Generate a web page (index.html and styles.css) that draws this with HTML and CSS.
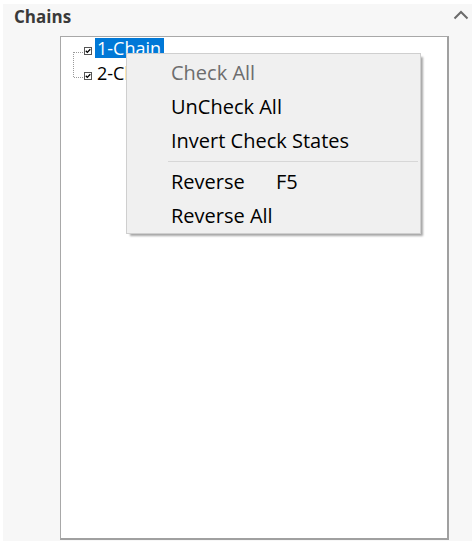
FILE: index.html
```html
<!DOCTYPE html>
<html>
<head>
<meta charset="utf-8">
<link rel="stylesheet" href="styles.css">
</head>
<body>
<div class="panel">
  <div class="header">
    <span class="title">Chains</span>
    <svg class="chevron" width="16" height="10" viewBox="0 0 16 10"><polyline points="1.5,8.5 8,2 14.5,8.5" fill="none" stroke="#6b6b6b" stroke-width="2"/></svg>
  </div>
  <div class="tree">
    <div class="tree-body">
      <svg class="connectors" width="23" height="50" viewBox="0 0 23 50">
        <g stroke="#9a9a9a" stroke-width="1" stroke-dasharray="1 1" fill="none">
          <line x1="12.5" y1="15" x2="12.5" y2="41"/>
          <line x1="13" y1="15.5" x2="22" y2="15.5"/>
          <line x1="13" y1="40.5" x2="22" y2="40.5"/>
        </g>
      </svg>
      <div class="items">
        <div class="row">
          <svg class="check" width="8" height="8" viewBox="0 0 8 8"><rect x="0.5" y="0.5" width="7" height="7" fill="#fff" stroke="#555"/><path d="M1.8 3.8 L3.3 5.4 L6.3 2.2" fill="none" stroke="#000" stroke-width="1.3"/></svg>
          <span class="label selected">1-Chain</span>
        </div>
        <div class="row">
          <svg class="check" width="8" height="8" viewBox="0 0 8 8"><rect x="0.5" y="0.5" width="7" height="7" fill="#fff" stroke="#555"/><path d="M1.8 3.8 L3.3 5.4 L6.3 2.2" fill="none" stroke="#000" stroke-width="1.3"/></svg>
          <span class="label">2-Chain</span>
        </div>
      </div>
    </div>
  </div>
</div>
<div class="menu">
  <div class="menu-item disabled">Check All</div>
  <div class="menu-item">UnCheck All</div>
  <div class="menu-item">Invert Check States</div>
  <div class="menu-sep"></div>
  <div class="menu-item"><span class="menu-label">Reverse</span><span class="shortcut">F5</span></div>
  <div class="menu-item">Reverse All</div>
</div>
</body>
</html>
```
FILE: styles.css
```css
html, body {
  margin: 0;
  padding: 0;
  background: #ffffff;
}
body {
  width: 474px;
  height: 544px;
  overflow: hidden;
  font-family: "Open Sans", "Noto Sans", sans-serif;
  padding-top: 4px;
  padding-left: 3px;
  box-sizing: border-box;
}
.panel {
  width: 469px;
  height: 537px;
  background: #f7f7f7;
  display: flex;
  flex-direction: column;
}
.header {
  height: 32px;
  box-sizing: border-box;
  padding: 3px 3px 0 11px;
  display: flex;
  justify-content: space-between;
  align-items: flex-start;
}
.title {
  font-weight: 700;
  font-size: 17px;
  line-height: 20px;
  color: #3a3a3a;
}
.chevron {
  margin-top: 3px;
  display: block;
}
.tree {
  margin-left: 57px;
  width: 389px;
  height: 504px;
  box-sizing: border-box;
  background: #ffffff;
  border-left: 1px solid #a8a8a8;
  border-top: 1px solid #a8a8a8;
  border-right: 2px solid #a0a0a0;
  border-bottom: 2px solid #a0a0a0;
}
.tree-body {
  display: flex;
  align-items: flex-start;
}
.connectors {
  display: block;
  flex: none;
}
.items {
  display: flex;
  flex-direction: column;
}
.row {
  height: 25px;
  display: flex;
  align-items: flex-start;
}
.check {
  display: block;
  margin-top: 10px;
  flex: none;
}
.label {
  margin-left: 3px;
  margin-top: 1px;
  height: 20px;
  line-height: 20px;
  font-size: 18px;
  padding: 0 3px 0 2px;
  color: #000;
  white-space: nowrap;
}
.label.selected {
  background: #0078d7;
  color: #fff;
}
.menu {
  position: absolute;
  left: 126px;
  top: 53px;
  width: 295px;
  box-sizing: border-box;
  background: #f0f0f0;
  border: 1px solid #cfcfcf;
  box-shadow: 3px 3px 2px -1px rgba(0, 0, 0, 0.35);
  padding: 2px 2px 0 0;
}
.menu-item {
  height: 34px;
  line-height: 34px;
  font-size: 20px;
  padding-left: 44px;
  color: #000;
  white-space: nowrap;
  display: flex;
}
.menu-item.disabled {
  color: #6d6d6d;
}
.menu-label {
  width: 105px;
}
.menu-sep {
  height: 1px;
  background: #d7d7d7;
  margin: 3px 0 3px 41px;
}
```
